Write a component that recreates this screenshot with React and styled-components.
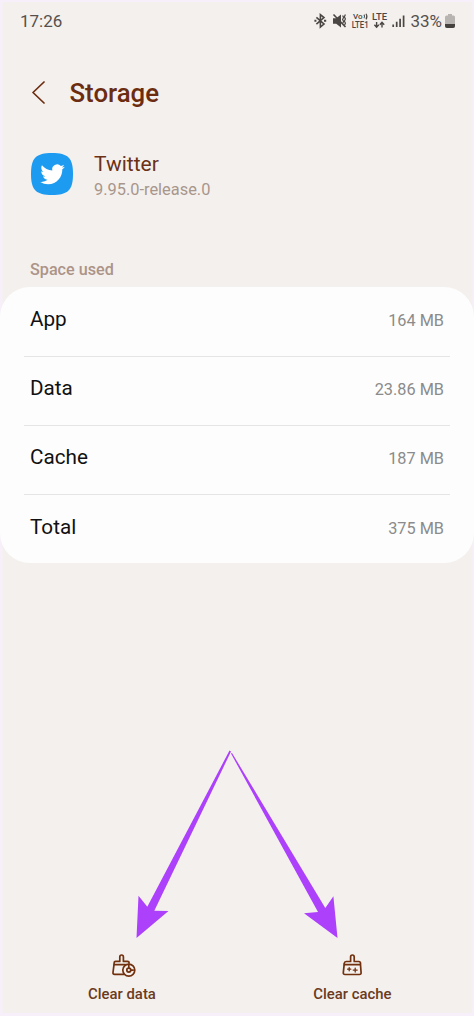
import React from "react";
import styled, { createGlobalStyle } from "styled-components";

const GlobalStyle = createGlobalStyle`
  * {
    box-sizing: border-box;
  }
  body {
    margin: 0;
    background: #f7f0fa;
    font-family: Roboto, "Liberation Sans", sans-serif;
  }
`;
const Frame = styled.div`
  width: 474px;
  height: 1016px;
  padding: 2px 0 3px;
  background: #f7f0fa;
  position: relative;
  overflow: hidden;
`;
const Screen = styled.div`
  height: 100%;
  display: flex;
  flex-direction: column;
  background: linear-gradient(to right, #f7f0fa 2px, #f4f0ed 3px, #f4f0ed 471px, #f7f0fa 473px);
`;
const StatusBar = styled.div`
  display: flex;
  justify-content: space-between;
  align-items: center;
  height: 38px;
  padding: 0 19px 0 20px;
  color: #55504d;
`;
const Clock = styled.span`
  font-size: 17px;
  line-height: 20px;
`;
const StatusIcons = styled.div`
  display: flex;
  align-items: center;
`;
const Battery = styled.span`
  font-size: 17px;
  line-height: 20px;
  margin: 0 3px 0 4px;
`;
const Header = styled.div`
  display: flex;
  align-items: center;
  height: 60px;
  margin-top: 23px;
  padding-left: 31px;
`;
const Title = styled.h1`
  margin: 0 0 0 22.5px;
  font-size: 25.8px;
  line-height: 30px;
  font-weight: 500;
  color: #6b2c10;
`;
const AppInfo = styled.div`
  display: flex;
  align-items: center;
  height: 50px;
  margin-top: 26px;
  padding-left: 30px;
`;
const AppText = styled.div`
  display: flex;
  flex-direction: column;
  margin-left: 20px;
  padding-top: 5px;
`;
const AppName = styled.span`
  font-size: 21px;
  line-height: 25px;
  color: #6b3016;
`;
const Version = styled.span`
  font-size: 16.4px;
  line-height: 25px;
  color: #a8968c;
`;
const SectionTitle = styled.h2`
  margin: 61px 0 7px 30px;
  font-size: 16.2px;
  line-height: 20px;
  font-weight: 500;
  color: #ac9488;
`;
const Card = styled.div`
  display: flex;
  flex-direction: column;
  height: 276px;
  padding: 0 24px;
  border-radius: 30px;
  background: #fdfdfd;
`;
const Row = styled.div`
  display: flex;
  flex-shrink: 0;
  justify-content: space-between;
  align-items: center;
  height: 69px;
  padding: 0 6px 5px;
  border-bottom: ${(props) => (props.$last ? "none" : "1px solid #e6e5e5")};

  &:first-child {
    height: 70px;
  }
`;
const RowName = styled.span`
  font-size: 20.7px;
  line-height: 26px;
  margin-top: -1px;
  color: #111;
`;
const RowValue = styled.span`
  font-size: 16.3px;
  line-height: 20px;
  margin-top: 3px;
  color: #8b8b8b;
`;
const Actions = styled.div`
  display: flex;
  justify-content: space-between;
  margin-top: auto;
  padding: 0 82.5px 9px 88px;
`;
const Action = styled.button`
  display: flex;
  flex-direction: column;
  align-items: center;
  gap: 6px;
  padding: 0;
  border: none;
  background: none;
  font-family: inherit;
  font-size: 14.9px;
  line-height: 20px;
  font-weight: 500;
  color: #6b3a20;
`;
const Arrows = styled.svg`
  position: absolute;
  left: 0;
  top: 0;
  pointer-events: none;
`;

const usage = [
  { name: "App", value: "164 MB" },
  { name: "Data", value: "23.86 MB" },
  { name: "Cache", value: "187 MB" },
  { name: "Total", value: "375 MB" },
];

const StatusGlyphs = () => (
  <svg width="93" height="20" viewBox="313 11 93 20" fill="none" stroke="#4a4643">
    <path d="M316.4 17.4l7.6 6.6-3.6 3V14.6l3.6 3-7.6 6.6" strokeWidth="1.6" />
    <path d="M314.4 20.8h2M324 20.8h2.2" strokeWidth="1.9" />
    <path d="M333 18.2h3.2l4.8-3.6v12.8l-4.8-3.6H333z" fill="#4a4643" stroke="none" />
    <path d="M333.5 14.5l12 12.5" strokeWidth="1.6" />
    <path d="M342.6 15.5l1 2-1 2 1 2-1 2M345.4 14.5l-1 2.2 1 2.2-1 2.2 1 2.2-1 2.2" strokeWidth="1.2" />
    <g fill="#4a4643" stroke="none" fontFamily="Roboto, sans-serif" fontWeight="500">
      <text x="353" y="19.4" fontSize="7.6" textLength="9.6" lengthAdjust="spacingAndGlyphs">Vo</text>
      <text x="351.7" y="28" fontSize="8.2" textLength="17" lengthAdjust="spacingAndGlyphs">LTE1</text>
      <text x="372" y="20" fontSize="9" textLength="15" lengthAdjust="spacingAndGlyphs">LTE</text>
    </g>
    <path d="M364 14.6q1.2 1.8 0 3.6M366 13.8q1.9 2.8 0 5.6" strokeWidth="1.1" />
    <path d="M376.6 22v5M374.4 24.8l2.2 2.4 2.2-2.4M382 27.6v-5M379.8 24.8l2.2-2.4 2.2 2.4" strokeWidth="1.4" />
    <path d="M393.2 24.5v2.5M396.7 21.8v5.2M400.1 18.7v8.3M403.6 15.5v11.5" strokeWidth="1.7" />
  </svg>
);

const BatteryIcon = () => (
  <svg width="10" height="14" viewBox="0 0 10 14">
    <path d="M3 0h4v1.5h1.5q1.5 0 1.5 1.5V12q0 2-2 2H2q-2 0-2-2V3q0-1.5 1.5-1.5H3z" fill="#b8b4b1" />
    <path d="M0 10h10v2q0 2-2 2H2q-2 0-2-2z" fill="#45413e" />
  </svg>
);

const BackIcon = () => (
  <svg width="16" height="24" viewBox="0 0 16 24" fill="none" stroke="#6b2c10" strokeWidth="1.7">
    <path d="M13 1L2 11.5 13 22" strokeLinecap="round" strokeLinejoin="round" />
  </svg>
);

const TwitterIcon = () => (
  <svg width="44" height="44" viewBox="0 0 44 44">
    <path d="M22 1C38 1 43 6 43 22S38 43 22 43 1 38 1 22 6 1 22 1z" fill="#1d9bf0" />
    <path
      transform="translate(10.3 10) scale(1.02)"
      fill="#fff"
      d="M23.953 4.57a10 10 0 01-2.825.775 4.958 4.958 0 002.163-2.723c-.951.555-2.005.959-3.127 1.184a4.92 4.92 0 00-8.384 4.482C7.69 8.095 4.067 6.13 1.64 3.162a4.822 4.822 0 00-.666 2.475c0 1.71.87 3.213 2.188 4.096a4.904 4.904 0 01-2.228-.616v.06a4.923 4.923 0 003.946 4.827 4.996 4.996 0 01-2.212.085 4.936 4.936 0 004.604 3.417 9.867 9.867 0 01-6.102 2.105c-.39 0-.779-.023-1.17-.067a13.995 13.995 0 007.557 2.209c9.053 0 13.998-7.496 13.998-13.985 0-.21 0-.42-.015-.63A9.935 9.935 0 0024 4.59z"
    />
  </svg>
);

const ClearDataIcon = () => (
  <svg width="26" height="24" viewBox="-2.2 0.3 26 24" fill="none" stroke="#71310f" strokeWidth="1.7" strokeLinejoin="round" strokeLinecap="round" overflow="visible">
    <path d="M12.5 20.6H3.4Q1.6 20.6 1.8 18.8L2.9 10.2V9.3Q2.9 7.7 4.5 7.7H8.6V3.3Q8.6 1.3 10.4 1.3T12.2 3.3V7.7H16.2Q17.9 7.7 17.9 9.3" />
    <path d="M3.1 10.9H14.2" />
    <circle cx="17.6" cy="16.4" r="6" />
    <circle cx="17.6" cy="16.4" r="2" />
    <path d="M17.6 10.8v3.4M19.6 16.4h2.4" />
  </svg>
);

const ClearCacheIcon = () => (
  <svg width="26" height="24" viewBox="-0.2 0.3 26 24" fill="none" stroke="#71310f" strokeWidth="1.7" strokeLinejoin="round" strokeLinecap="round">
    <path d="M5.7 20.8H20.3Q22 20.8 21.9 19L21.3 11V9.5Q21.3 7.8 19.5 7.8H15V3.3Q15 1.3 13.2 1.3T11.4 3.3V7.8H7Q5.2 7.8 5.1 9.5L4.1 19Q4 20.8 5.7 20.8z" />
    <path d="M5.2 11H21" />
    <path d="M10 13.9v3.2M8.4 15.5h3.2M16 14.4v4M14 16.4h4" strokeWidth="1.3" />
  </svg>
);

export default function App() {
  return (
    <>
      <GlobalStyle />
      <Frame>
        <Screen>
          <StatusBar>
            <Clock>17:26</Clock>
            <StatusIcons>
              <StatusGlyphs />
              <Battery>33%</Battery>
              <BatteryIcon />
            </StatusIcons>
          </StatusBar>
          <Header>
            <BackIcon />
            <Title>Storage</Title>
          </Header>
          <AppInfo>
            <TwitterIcon />
            <AppText>
              <AppName>Twitter</AppName>
              <Version>9.95.0-release.0</Version>
            </AppText>
          </AppInfo>
          <SectionTitle>Space used</SectionTitle>
          <Card>
            {usage.map((item, index) => (
              <Row key={item.name} $last={index === usage.length - 1}>
                <RowName>{item.name}</RowName>
                <RowValue>{item.value}</RowValue>
              </Row>
            ))}
          </Card>
          <Actions>
            <Action>
              <ClearDataIcon />
              Clear data
            </Action>
            <Action>
              <ClearCacheIcon />
              Clear cache
            </Action>
          </Actions>
        </Screen>
        <Arrows width="474" height="1016" viewBox="0 0 474 1016" fill="#ac40fb">
          <path d="M229.5 750.5L147.3 906.7 138.5 895.7 136.5 938 168.5 911 154.3 910.7 231 751.5z" />
          <path d="M231 753.5L318 912 304 913.3 337.5 938 333.4 896.3 325.3 908 232 753z" />
        </Arrows>
      </Frame>
    </>
  );
}
